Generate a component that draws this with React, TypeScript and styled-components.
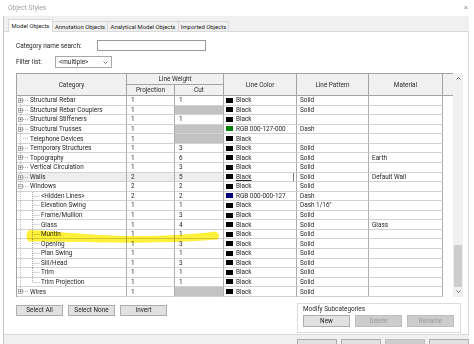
import React from 'react'
import styled, { createGlobalStyle } from 'styled-components'

const GlobalStyle = createGlobalStyle`
  html, body { margin: 0; padding: 0; background: #ffffff; }
  body {
    font-family: "Segoe UI", Roboto, "Liberation Sans", sans-serif;
    font-size: 6.4px;
    color: #1f1f1f;
  }
  * { box-sizing: border-box; }
`

type Row = {
  name: string
  level?: 1
  exp?: '+' | '-'
  last?: boolean
  proj: string
  cut?: string
  color?: string
  swatch?: string
  pattern?: string
  material?: string
  selected?: boolean
}

const rows: Row[] = [
  { name: 'Structural Rebar', exp: '+', proj: '1', cut: '1', pattern: 'Solid' },
  { name: 'Structural Rebar Couplers', exp: '+', proj: '1', pattern: 'Solid' },
  { name: 'Structural Stiffeners', exp: '+', proj: '1', cut: '1' },
  { name: 'Structural Trusses', exp: '+', proj: '1', color: 'RGB 000-127-000', swatch: '#007f00', pattern: 'Dash' },
  { name: 'Telephone Devices', proj: '1' },
  { name: 'Temporary Structures', exp: '+', proj: '1', cut: '3', pattern: 'Solid' },
  { name: 'Topography', exp: '+', proj: '1', cut: '6', pattern: 'Solid', material: 'Earth' },
  { name: 'Vertical Circulation', exp: '+', proj: '1', cut: '3', pattern: 'Solid' },
  { name: 'Walls', exp: '+', proj: '2', cut: '5', pattern: 'Solid', material: 'Default Wall', selected: true },
  { name: 'Windows', exp: '-', proj: '2', cut: '2', pattern: 'Solid' },
  { name: '<Hidden Lines>', level: 1, proj: '2', cut: '2', color: 'RGB 000-000-127', swatch: '#00007f', pattern: 'Dash' },
  { name: 'Elevation Swing', level: 1, proj: '1', cut: '1', pattern: 'Dash 1/16"' },
  { name: 'Frame/Mullion', level: 1, proj: '1', cut: '3', pattern: 'Solid' },
  { name: 'Glass', level: 1, proj: '1', cut: '4', pattern: 'Solid', material: 'Glass' },
  { name: 'Muntin', level: 1, proj: '1', cut: '1', pattern: 'Solid' },
  { name: 'Opening', level: 1, proj: '1', cut: '3', pattern: 'Solid' },
  { name: 'Plan Swing', level: 1, proj: '1', cut: '1', pattern: 'Solid' },
  { name: 'Sill/Head', level: 1, proj: '1', cut: '3', pattern: 'Solid' },
  { name: 'Trim', level: 1, proj: '1', cut: '1', pattern: 'Solid' },
  { name: 'Trim Projection', level: 1, proj: '1', cut: '1', pattern: 'Solid', last: true },
  { name: 'Wires', exp: '+', proj: '1', pattern: 'Solid', last: true },
]

const Window = styled.div`
  width: 474px;
  height: 344px;
  overflow: hidden;
  display: flex;
  flex-direction: column;
  background: #ffffff;
`

const TitleBar = styled.div`
  height: 16px;
  flex: none;
  display: flex;
  align-items: center;
  justify-content: space-between;
  padding: 0 6px 1px 8px;
  color: #a0a0a0;
  font-size: 6.6px;
`

const CloseGlyph = styled.span`
  font-size: 8px;
  color: #9a9a9a;
`

const Frame = styled.div`
  flex: 1;
  min-height: 0;
  display: flex;
  flex-direction: column;
  margin: 0 5px 0 3px;
  border-left: 1px solid #c6c6c6;
  background: #f0f0f0;
`

const TabStrip = styled.div`
  height: 15px;
  flex: none;
  display: flex;
  align-items: flex-end;
  padding-left: 5px;
  position: relative;
  z-index: 1;
`

const Tab = styled.div<{ $active?: boolean; $w: number }>`
  width: ${p => p.$w}px;
  height: ${p => (p.$active ? 13 : 10)}px;
  margin-bottom: ${p => (p.$active ? -1 : 0)}px;
  margin-left: -1px;
  display: flex;
  align-items: center;
  justify-content: center;
  white-space: nowrap;
  font-size: 5.9px;
  border: 1px solid #d9d9d9;
  border-bottom: none;
  background: ${p => (p.$active ? '#ffffff' : '#f0f0f0')};
  color: #222222;
`

const Panel = styled.div`
  height: 304px;
  flex: none;
  display: flex;
  flex-direction: column;
  background: #ffffff;
  border-top: 1px solid #d9d9d9;
  border-right: 1px solid #d9d9d9;
  border-bottom: 1px solid #d9d9d9;
  padding: 8px 6px 0 12px;
`

const FieldRow = styled.div<{ $h: number; $top?: number }>`
  height: ${p => p.$h}px;
  margin-top: ${p => p.$top ?? 0}px;
  display: flex;
  align-items: center;
  flex: none;
`

const Label = styled.span<{ $w: number }>`
  width: ${p => p.$w}px;
  flex: none;
  white-space: nowrap;
`

const TextInput = styled.div`
  width: 109px;
  height: 100%;
  border: 1px solid #9a9a9a;
  background: #ffffff;
`

const Select = styled.div`
  width: 57px;
  height: 100%;
  border: 1px solid #a8a8a8;
  background: #ffffff;
  display: flex;
  align-items: center;
  justify-content: space-between;
  padding: 0 3px 0 3px;
`

const TableWrap = styled.div`
  margin-top: 5px;
  display: flex;
  flex: none;
  position: relative;
`

const Grid = styled.div`
  display: grid;
  grid-template-columns: 110px 48px 49px 73px 72px 74px 10px;
  grid-template-rows: 11px 11px repeat(21, 9.57px);
  border-top: 1px solid #a3a3a3;
  border-left: 1px solid #a3a3a3;
`

const HeadCell = styled.div<{ $col: string; $row: string; $last?: boolean }>`
  grid-column: ${p => p.$col};
  grid-row: ${p => p.$row};
  background: #f0f0f0;
  border-right: ${p => (p.$last ? 'none' : '1px solid #a3a3a3')};
  border-bottom: 1px solid #a3a3a3;
  display: flex;
  align-items: center;
  justify-content: center;
  color: #2a2a2a;
  white-space: nowrap;
`

const Cell = styled.div<{ $gray?: boolean; $sel?: boolean; $pad?: number }>`
  display: flex;
  align-items: center;
  overflow: hidden;
  white-space: nowrap;
  padding-left: ${p => p.$pad ?? 3}px;
  border-right: 1px solid #adadad;
  border-bottom: 1px solid #d2d2d2;
  background: ${p => (p.$gray ? '#c3c3c3' : p.$sel ? '#eeeeee' : '#ffffff')};
`

const TreeCell = styled(Cell)`
  padding-left: 0;
  overflow: visible;
`

const Filler = styled.div`
  background: #ffffff;
`

const Swatch = styled.span<{ $c: string }>`
  width: 7px;
  height: 5px;
  flex: none;
  margin-right: 3px;
  background: ${p => p.$c};
`

const EditValue = styled.span`
  flex: 1;
  align-self: stretch;
  display: flex;
  align-items: center;
  text-decoration: underline;
  border-right: 1px solid #7c7c7c;
  margin-right: 2px;
`

const ScrollBar = styled.div`
  width: 10px;
  flex: none;
  display: flex;
  flex-direction: column;
  background: #f0f0f0;
`

const ScrollArrow = styled.div`
  height: 10px;
  flex: none;
  display: flex;
  align-items: center;
  justify-content: center;
`

const ScrollTrack = styled.div`
  flex: 1;
  display: flex;
  flex-direction: column;
  justify-content: flex-end;
  padding: 0 1px;
`

const Thumb = styled.div`
  height: 42px;
  background: #cdcdcd;
`

const Highlight = styled.svg`
  position: absolute;
  left: 0;
  top: 0;
  pointer-events: none;
  mix-blend-mode: multiply;
`

const BottomRow = styled.div`
  flex: 1;
  display: flex;
  align-items: flex-start;
`

const ButtonGroup = styled.div<{ $top: number }>`
  display: flex;
  gap: 5px;
  margin-top: ${p => p.$top}px;
`

const Button = styled.div<{ $w: number; $h: number; $disabled?: boolean }>`
  width: ${p => p.$w}px;
  height: ${p => p.$h}px;
  flex: none;
  display: flex;
  align-items: center;
  justify-content: center;
  white-space: nowrap;
  background: ${p => (p.$disabled ? '#cccccc' : '#e1e1e1')};
  border: 1px solid ${p => (p.$disabled ? '#bfbfbf' : '#adadad')};
  color: ${p => (p.$disabled ? '#9a9a9a' : '#1f1f1f')};
`

const GroupBox = styled.div`
  width: 164px;
  height: 30px;
  margin: 6px 1px 0 auto;
  border: 1px solid #dcdcdc;
  padding: 1px 0 0 5px;
  display: flex;
  flex-direction: column;
`

const GroupTitle = styled.span`
  line-height: 8px;
  color: #2a2a2a;
`

const DialogButtons = styled.div`
  flex: 1;
  display: flex;
  justify-content: flex-end;
  gap: 4px;
  padding: 4px 0 0 0;
`

const Chevron = ({ up }: { up?: boolean }) => (
  <svg width="5" height="3" viewBox="0 0 5 3">
    <polyline
      points={up ? '0.5,2.5 2.5,0.5 4.5,2.5' : '0.5,0.5 2.5,2.5 4.5,0.5'}
      fill="none"
      stroke="#606060"
      strokeWidth="0.9"
    />
  </svg>
)

const TreeGuide = ({ row }: { row: Row }) => {
  const child = row.level === 1
  const w = child ? 24 : 13
  const mid = 4.3
  const outer = { stroke: '#bdbdbd', strokeWidth: 1, strokeDasharray: '1 1' }
  const line = { stroke: '#a8a8a8', strokeWidth: 1, strokeDasharray: '1 1' }
  return (
    <svg width={w} height="100%" style={{ overflow: 'visible', flex: 'none' }}>
      <line x1="3.5" y1="0" x2="3.5" y2={row.last && !child ? mid : 9.6} {...outer} />
      {child ? (
        <>
          <line x1="15.5" y1="0" x2="15.5" y2={row.last ? mid : 9.6} {...line} />
          <line x1="15.5" y1={mid} x2="23" y2={mid} {...line} />
        </>
      ) : (
        <line x1="6" y1={mid} x2="12" y2={mid} {...line} />
      )}
      {row.exp && (
        <>
          <rect x="1.5" y={mid - 2} width="4" height="4" fill="#ffffff" stroke="#9a9a9a" strokeWidth="0.8" />
          <line x1="2.4" y1={mid} x2="4.6" y2={mid} stroke="#4a4a4a" strokeWidth="0.6" />
          {row.exp === '+' && <line x1="3.5" y1={mid - 1.1} x2="3.5" y2={mid + 1.1} stroke="#4a4a4a" strokeWidth="0.6" />}
        </>
      )}
    </svg>
  )
}

const ObjectTable = () => (
  <TableWrap>
    <Grid>
      <HeadCell $col="1" $row="1 / 3">Category</HeadCell>
      <HeadCell $col="2 / 4" $row="1">Line Weight</HeadCell>
      <HeadCell $col="2" $row="2">Projection</HeadCell>
      <HeadCell $col="3" $row="2">Cut</HeadCell>
      <HeadCell $col="4" $row="1 / 3">Line Color</HeadCell>
      <HeadCell $col="5" $row="1 / 3">Line Pattern</HeadCell>
      <HeadCell $col="6" $row="1 / 3">Material</HeadCell>
      <HeadCell $col="7" $row="1 / 3" $last />
      {rows.map(r => (
        <React.Fragment key={r.name}>
          <TreeCell $sel={r.selected}>
            <TreeGuide row={r} />
            <span>{r.name}</span>
          </TreeCell>
          <Cell $sel={r.selected} $pad={4}>{r.proj}</Cell>
          <Cell $sel={r.selected} $gray={!r.cut} $pad={4}>{r.cut}</Cell>
          <Cell $pad={2}>
            <Swatch $c={r.swatch ?? '#000000'} />
            {r.selected ? <EditValue>{r.color ?? 'Black'}</EditValue> : <span>{r.color ?? 'Black'}</span>}
          </Cell>
          <Cell>{r.pattern}</Cell>
          <Cell>{r.material}</Cell>
          <Filler />
        </React.Fragment>
      ))}
    </Grid>
    <ScrollBar>
      <ScrollArrow>
        <Chevron up />
      </ScrollArrow>
      <ScrollTrack>
        <Thumb />
      </ScrollTrack>
      <ScrollArrow>
        <Chevron />
      </ScrollArrow>
    </ScrollBar>
    <Highlight width="446" height="224" viewBox="0 0 446 224">
      <path
        d="M12 157.5 C 24 156.5, 48 160.5, 100 162.8 C 140 164, 175 161.5, 200 158.5 Q 205 162 201.5 166.5 C 170 169, 130 170, 92 169.6 C 52 169.2, 26 169, 12.5 168.6 Q 8.5 163 12 157.5 Z"
        fill="#fff03a"
      />
    </Highlight>
  </TableWrap>
)

export default function App() {
  return (
    <Window>
      <GlobalStyle />
      <TitleBar>
        <span>Object Styles</span>
        <CloseGlyph>×</CloseGlyph>
      </TitleBar>
      <Frame>
        <TabStrip>
          <Tab $active $w={45}>Model Objects</Tab>
          <Tab $w={56}>Annotation Objects</Tab>
          <Tab $w={72}>Analytical Model Objects</Tab>
          <Tab $w={51}>Imported Objects</Tab>
        </TabStrip>
        <Panel>
          <FieldRow $h={11}>
            <Label $w={81}>Category name search:</Label>
            <TextInput />
          </FieldRow>
          <FieldRow $h={12} $top={5}>
            <Label $w={39}>Filter list:</Label>
            <Select>
              <span>&lt;multiple&gt;</span>
              <Chevron />
            </Select>
          </FieldRow>
          <ObjectTable />
          <BottomRow>
            <ButtonGroup $top={8}>
              <Button $w={47} $h={11}>Select All</Button>
              <Button $w={47} $h={11}>Select None</Button>
              <Button $w={47} $h={11}>Invert</Button>
            </ButtonGroup>
            <GroupBox>
              <GroupTitle>Modify Subcategories</GroupTitle>
              <ButtonGroup $top={2}>
                <Button $w={47} $h={12}>New</Button>
                <Button $w={47} $h={12} $disabled>Delete</Button>
                <Button $w={47} $h={12} $disabled>Rename</Button>
              </ButtonGroup>
            </GroupBox>
          </BottomRow>
        </Panel>
        <DialogButtons>
          <Button $w={40} $h={14} />
          <Button $w={40} $h={14} />
          <Button $w={40} $h={14} $disabled />
          <Button $w={40} $h={14} />
        </DialogButtons>
      </Frame>
    </Window>
  )
}
